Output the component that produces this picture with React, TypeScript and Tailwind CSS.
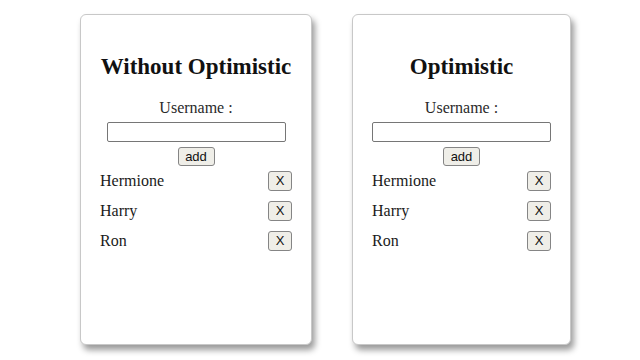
import React, { useState } from "react";

const serif = "font-['Liberation_Serif','Times_New_Roman',serif]";
const sans = "font-['Liberation_Sans',Arial,sans-serif]";

type Props = { title: string; width: string };

const UserCard = ({ title, width }: Props) => {
  const [users, setUsers] = useState(["Hermione", "Harry", "Ron"]);
  const [name, setName] = useState("");

  return (
    <div
      className={`${width} h-[331px] rounded-[6px] border border-[#c8c8c8] bg-white px-[19px] shadow-[3px_5px_6px_rgba(0,0,0,0.4)] ${serif} text-[#1a1a1a]`}
    >
      <h2 className="-mx-3 mt-[38px] h-[28px] whitespace-nowrap text-center text-[23px] font-bold leading-[28px] text-[#111]">
        {title}
      </h2>
      <div className="mt-[18px] flex flex-col items-center">
        <label className="h-[18px] text-[16px] leading-[18px] text-[#2a2a2a]">Username :</label>
        <input
          value={name}
          onChange={e => setName(e.target.value)}
          className="mt-[5px] h-[20px] w-[179px] rounded-[2px] border border-[#767676] bg-white px-1 text-[13px]"
        />
        <button
          onClick={() => {
            if (name) setUsers([...users, name]);
            setName("");
          }}
          className={`mt-[5px] h-[19px] w-[37px] rounded-[3px] border border-[#858585] bg-[#efeee8] text-[13px] leading-[17px] text-[#111] ${sans}`}
        >
          add
        </button>
      </div>
      <ul className="mt-[5px] flex flex-col gap-[10px]">
        {users.map(u => (
          <li key={u} className="flex h-[20px] items-center justify-between text-[16px]">
            <span>{u}</span>
            <button
              onClick={() => setUsers(users.filter(x => x !== u))}
              className={`h-[20px] w-[24px] rounded-[3px] border border-[#858585] bg-[#efeee8] text-[13px] leading-[18px] text-[#111] ${sans}`}
            >
              X
            </button>
          </li>
        ))}
      </ul>
    </div>
  );
};

export default function App() {
  return (
    <div className="flex h-[360px] w-[640px] gap-[40px] bg-white pl-[80px] pt-[14px]">
      <UserCard title="Without Optimistic" width="w-[232px]" />
      <UserCard title="Optimistic" width="w-[219px]" />
    </div>
  );
}
